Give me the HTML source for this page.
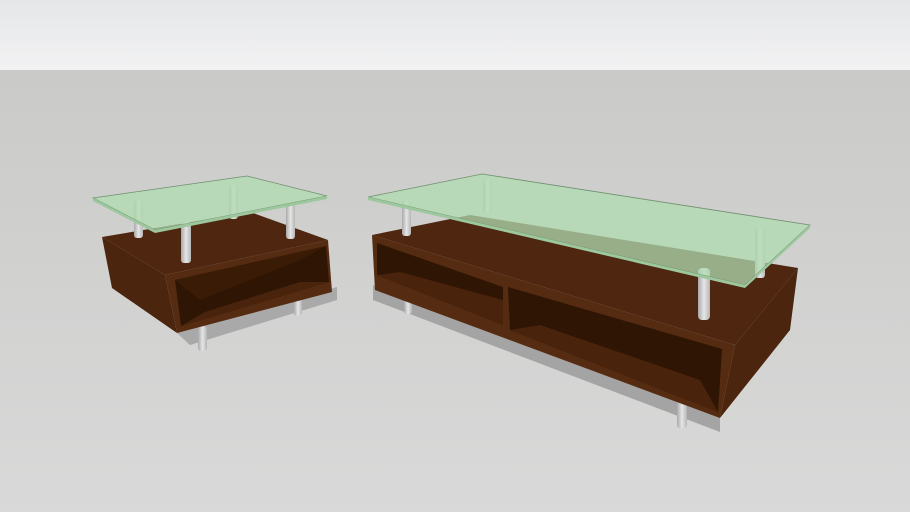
<!DOCTYPE html>
<html><head><meta charset="utf-8"><style>
html,body{margin:0;padding:0;width:910px;height:512px;overflow:hidden}
svg{display:block}
</style></head><body>
<svg width="910" height="512" viewBox="0 0 910 512" xmlns="http://www.w3.org/2000/svg">
<defs>
<linearGradient id="sky" x1="0" y1="0" x2="0" y2="1"><stop offset="0" stop-color="#e5e6e8"/><stop offset="1" stop-color="#f2f2f3"/></linearGradient>
<linearGradient id="gr" x1="0" y1="0" x2="0" y2="1"><stop offset="0" stop-color="#cacac8"/><stop offset="1" stop-color="#d9d9d9"/></linearGradient>
<linearGradient id="leg" x1="0" y1="0" x2="1" y2="0"><stop offset="0" stop-color="#a8a8a8"/><stop offset=".5" stop-color="#e6e6e6"/><stop offset="1" stop-color="#b5b5b5"/></linearGradient>
</defs>
<rect width="910" height="70" fill="url(#sky)"/>
<rect y="70" width="910" height="442" fill="url(#gr)"/>

<!-- SMALL TABLE -->
<polygon points="177,333 337,287 337,300 190,345" fill="#a9a9a9"/>
<rect x="294" y="292" width="8" height="24" rx="3" fill="url(#leg)"/>
<rect x="198" y="326" width="9" height="25" rx="3" fill="url(#leg)"/>
<polygon points="102,237 165,275 177,333 112,288" fill="#4b250e"/>
<polygon points="102,237 250,212 328,240 165,275" fill="#4f2710"/>
<polygon points="165,275 328,240 332,292 177,333" fill="#552b12"/>
<polygon points="175,280 326,246 329,282 181,326" fill="#2f1503"/>
<polygon points="175,280 326,246 300,260 200,300" fill="#3a1b06"/>
<polygon points="181,326 329,282 300,282 205,312" fill="#4a230c"/>
<rect x="134" y="200" width="9" height="38" rx="3" fill="url(#leg)"/>
<rect x="181" y="222" width="10" height="41" rx="3" fill="url(#leg)"/>
<rect x="286" y="203" width="9" height="36" rx="3" fill="url(#leg)"/>
<rect x="229" y="185" width="9" height="34" rx="3" fill="url(#leg)"/>
<polygon points="93,198 247,176 327,196 155,230" fill="#b0dcb0" fill-opacity=".75" stroke="#6f8f6f" stroke-width=".8"/>
<polygon points="93,198 155,230 155,233 93,201" fill="#9dc79d"/>
<polygon points="155,230 327,196 327,199 155,233" fill="#9dc79d"/>

<!-- BIG TABLE -->
<polygon points="373,285 720,410 720,432 373,300" fill="#a4a4a4"/>
<rect x="404" y="295" width="8" height="19" rx="3" fill="url(#leg)"/>
<rect x="677" y="400" width="10" height="28" rx="3" fill="url(#leg)"/>
<polygon points="372,235 470,215 798,268 735,345" fill="#4f2710"/>
<polygon points="372,235 735,345 720,418 375,290" fill="#552b12"/>
<polygon points="735,345 798,268 790,330 720,418" fill="#4b250e"/>
<polygon points="377,243 503,287 503,325 377,275" fill="#2f1503"/>
<polygon points="377,275 503,325 503,300 400,272" fill="#4a230c"/>
<polygon points="508,287 722,349 718,412 510,330" fill="#2f1503"/>
<polygon points="510,330 718,412 700,380 540,325" fill="#4a230c"/>
<rect x="402" y="200" width="9" height="36" rx="3" fill="url(#leg)"/>
<rect x="483" y="180" width="9" height="33" rx="3" fill="url(#leg)"/>
<rect x="755" y="228" width="10" height="50" rx="3" fill="url(#leg)"/>
<rect x="698" y="268" width="12" height="52" rx="4" fill="url(#leg)"/>
<polygon points="368,197 482,174 810,225 745,285" fill="#b0dcb0" fill-opacity=".75" stroke="#6f8f6f" stroke-width=".8"/>
<polygon points="368,197 745,285 745,288 368,200" fill="#9dc79d"/>
<polygon points="745,285 810,225 810,228 745,288" fill="#9dc79d"/>
</svg>
</body></html>
